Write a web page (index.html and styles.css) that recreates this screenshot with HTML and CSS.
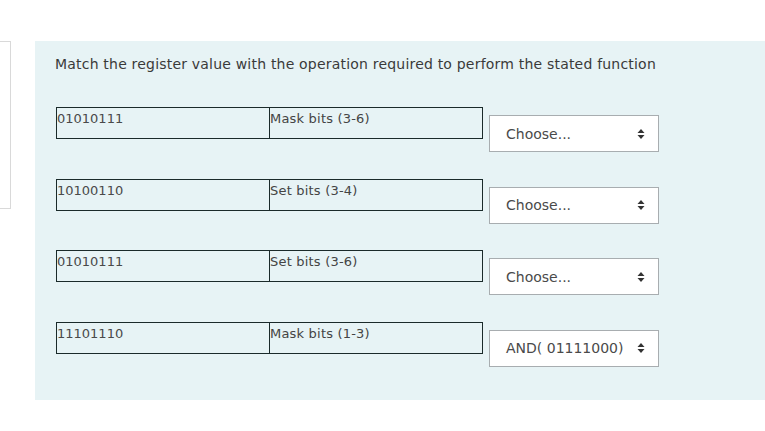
FILE: index.html
```html
<!DOCTYPE html>
<html>
<head>
<meta charset="utf-8">
<link rel="stylesheet" href="styles.css">
</head>
<body>
<div class="page">
  <div class="side"></div>
  <div class="panel">
    <p class="qtext">Match the register value with the operation required to perform the stated function</p>
    <div class="rows">
      <div class="row">
        <div class="pair"><div class="cell c1">01010111</div><div class="cell">Mask bits (3-6)</div></div>
        <div class="select"><span>Choose...</span><svg class="arr" width="8" height="12" viewBox="0 0 8 12"><path d="M4 1 L7.5 5 H0.5 Z M4 11 L7.5 7 H0.5 Z" fill="#333"/></svg></div>
      </div>
      <div class="row">
        <div class="pair"><div class="cell c1">10100110</div><div class="cell">Set bits (3-4)</div></div>
        <div class="select"><span>Choose...</span><svg class="arr" width="8" height="12" viewBox="0 0 8 12"><path d="M4 1 L7.5 5 H0.5 Z M4 11 L7.5 7 H0.5 Z" fill="#333"/></svg></div>
      </div>
      <div class="row">
        <div class="pair"><div class="cell c1">01010111</div><div class="cell">Set bits (3-6)</div></div>
        <div class="select"><span>Choose...</span><svg class="arr" width="8" height="12" viewBox="0 0 8 12"><path d="M4 1 L7.5 5 H0.5 Z M4 11 L7.5 7 H0.5 Z" fill="#333"/></svg></div>
      </div>
      <div class="row">
        <div class="pair"><div class="cell c1">11101110</div><div class="cell">Mask bits (1-3)</div></div>
        <div class="select"><span>AND( 01111000)</span><svg class="arr" width="8" height="12" viewBox="0 0 8 12"><path d="M4 1 L7.5 5 H0.5 Z M4 11 L7.5 7 H0.5 Z" fill="#333"/></svg></div>
      </div>
    </div>
  </div>
</div>
</body>
</html>
```
FILE: styles.css
```css
html, body {
  margin: 0;
  padding: 0;
  background: #ffffff;
}
body {
  font-family: "DejaVu Sans", "Open Sans", sans-serif;
  color: #333333;
}
.page {
  display: flex;
  align-items: flex-start;
  padding-top: 41px;
  gap: 24px;
}
.side {
  width: 10px;
  height: 166px;
  border: 1px solid #d9d9d9;
  border-left: none;
  background: #fff;
  flex: none;
}
.panel {
  flex: 1;
  background: #e7f3f5;
  height: 359px;
  padding: 13px 0 0 20px;
  box-sizing: border-box;
}
.qtext {
  margin: 0;
  font-size: 14px;
  line-height: 20px;
  color: #3a3a3a;
  letter-spacing: 0.2px;
}
.rows {
  display: flex;
  flex-direction: column;
  gap: 26.5px;
  margin-top: 33px;
  padding-left: 1px;
}
.row {
  display: flex;
  align-items: flex-start;
  gap: 6px;
}
.pair {
  display: flex;
  width: 427px;
  height: 32px;
  border: 1px solid #1a2a2a;
  box-sizing: border-box;
}
.cell {
  flex: 1;
  font-size: 13px;
  line-height: 18px;
  padding: 2px 0 0 0;
  color: #444444;
  letter-spacing: 0.2px;
}
.c1 {
  border-right: 1px solid #1a2a2a;
  letter-spacing: 0;
  color: #4a4a4a;
}
.select {
  margin-top: 8px;
  width: 170px;
  height: 37px;
  box-sizing: border-box;
  background: #fff;
  border: 1px solid #a8adb0;
  display: flex;
  align-items: center;
  justify-content: space-between;
  padding: 0 13px 0 16px;
  font-size: 14px;
  color: #4a4a4a;
}
.arr {
  display: block;
}
```
